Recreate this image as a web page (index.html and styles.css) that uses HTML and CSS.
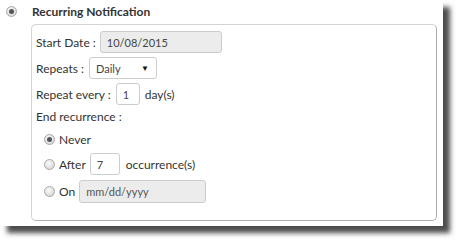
FILE: index.html
```html
<!DOCTYPE html>
<html>
<head>
<meta charset="utf-8">
<link rel="stylesheet" href="styles.css">
</head>
<body>
<div class="shot">
  <div class="title-row">
    <span class="radio checked"></span>
    <span class="title">Recurring Notification</span>
  </div>
  <div class="box">
    <div class="row r1">
      <span class="lbl">Start Date :</span>
      <span class="field date">10/08/2015</span>
    </div>
    <div class="row r2">
      <span class="lbl">Repeats :</span>
      <span class="field select">Daily<span class="caret">&#9660;</span></span>
    </div>
    <div class="row r3">
      <span class="lbl">Repeat every :</span>
      <span class="field num">1</span>
      <span class="lbl">day(s)</span>
    </div>
    <div class="row r4">
      <span class="lbl">End recurrence :</span>
    </div>
    <div class="opts">
      <div class="row r5">
        <span class="radio checked"></span>
        <span class="lbl">Never</span>
      </div>
      <div class="row r6">
        <span class="radio"></span>
        <span class="lbl">After</span>
        <span class="field occ">7</span>
        <span class="lbl">occurrence(s)</span>
      </div>
      <div class="row r7">
        <span class="radio"></span>
        <span class="lbl">On</span>
        <span class="field ondate">mm/dd/yyyy</span>
      </div>
    </div>
  </div>
</div>
</body>
</html>
```
FILE: styles.css
```css
html, body {
  margin: 0;
  padding: 0;
  background: #fff;
}
body {
  font-family: Lato, "Open Sans", sans-serif;
  color: #333;
  width: 460px;
  height: 241px;
  overflow: hidden;
}
.shot {
  width: 443px;
  height: 226px;
  background: #fff;
  box-shadow: 7px 7px 5px rgba(0, 0, 0, 0.7);
  box-sizing: border-box;
  padding: 4px 0 0 0;
}
.title-row {
  display: flex;
  align-items: center;
  height: 14px;
  padding-left: 6px;
  gap: 15px;
}
.title {
  font-size: 12px;
  font-weight: 700;
  color: #333;
}
.radio {
  display: inline-block;
  width: 9px;
  height: 9px;
  border-radius: 50%;
  border: 1px solid #a8a8a8;
  background: radial-gradient(circle at 40% 35%, #fafafa 0%, #dcdcdc 70%, #c8c8c8 100%);
  position: relative;
  flex: none;
}
.radio.checked::after {
  content: "";
  position: absolute;
  left: 2px;
  top: 2px;
  width: 5px;
  height: 5px;
  border-radius: 50%;
  background: #555;
}
.box {
  margin: 6px 0 0 31px;
  width: 406px;
  height: 197px;
  box-sizing: border-box;
  border: 1px solid #d4d4d4;
  border-right-color: #b0b0b0;
  border-bottom-color: #b0b0b0;
  border-radius: 5px;
  padding: 6px 0 0 4px;
}
.row {
  display: flex;
  align-items: center;
  height: 22px;
}
.lbl {
  font-size: 12px;
  color: #333;
}
.field {
  display: inline-flex;
  align-items: center;
  box-sizing: border-box;
  height: 22px;
  border: 1px solid #ccc;
  border-radius: 3px;
  font-size: 11px;
  color: #444;
  padding-left: 6px;
  background: #fff;
}
.date {
  width: 122px;
  margin-left: 4px;
  background: #ececec;
}
.r2 { margin-top: 4px; }
.select {
  width: 68px;
  margin-left: 5px;
  position: relative;
}
.caret {
  position: absolute;
  right: 7px;
  top: 5px;
  font-size: 8px;
  color: #111;
}
.r3 { margin-top: 4px; }
.num {
  width: 24px;
  margin-left: 5px;
  margin-right: 5px;
}
.r4 {
  margin-top: 3px;
  height: 16px;
}
.opts {
  padding-left: 8px;
}
.opts .radio {
  margin-right: 4px;
}
.r5 {
  margin-top: 6px;
  height: 18px;
}
.r6 { margin-top: 5px; }
.occ {
  width: 30px;
  margin-left: 4px;
  margin-right: 6px;
}
.r7 { margin-top: 5px; height: 23px; }
.ondate {
  width: 127px;
  height: 23px;
  margin-left: 4px;
  background: #ececec;
  color: #555;
}
```
